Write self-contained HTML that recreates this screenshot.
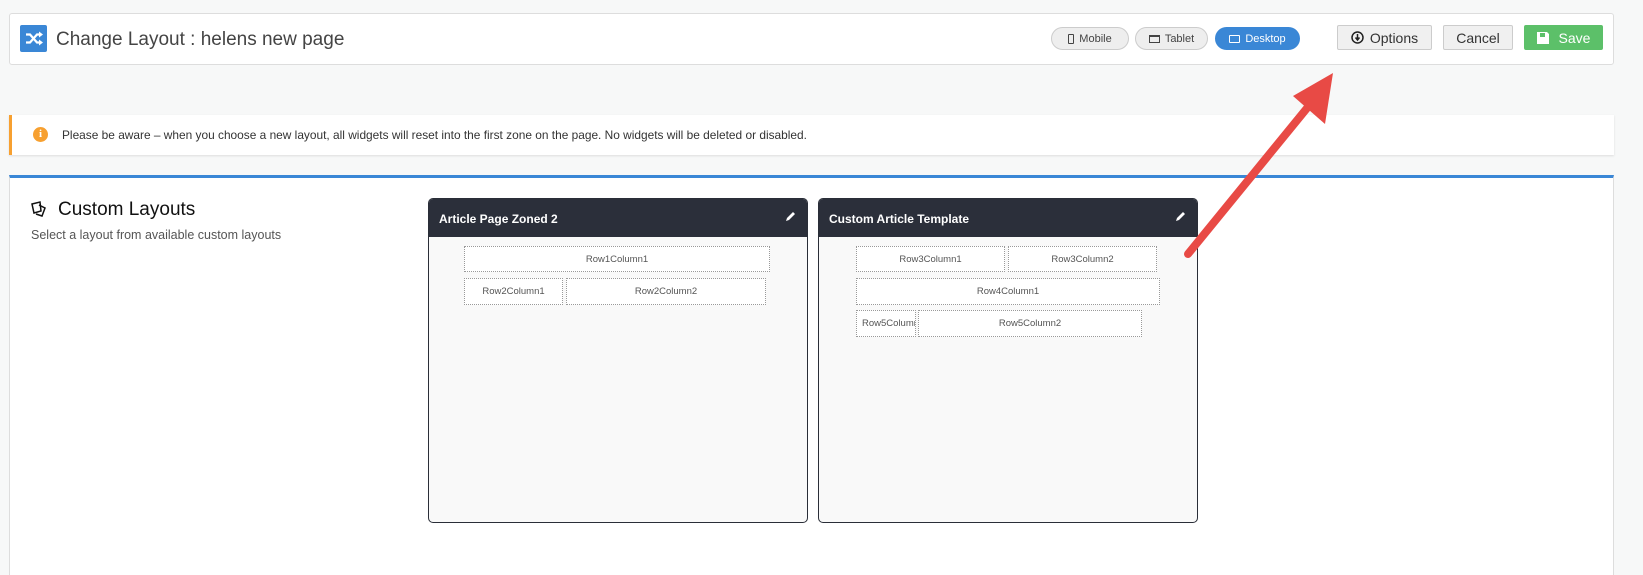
<!DOCTYPE html>
<html><head><style>
*{box-sizing:border-box;margin:0;padding:0}
body{width:1643px;height:550px;background:#f7f8f8;font-family:"Liberation Sans",sans-serif;position:relative;overflow:hidden;color:#333}
.abs{position:absolute}
.hdr{left:9px;top:13px;width:1605px;height:52px;background:#fff;border:1px solid #ddd;border-radius:3px}
.pill{position:absolute;top:27px;height:23px;border-radius:12px;border:1px solid #ccc;background:#eee;font-size:11px;color:#444;display:flex;align-items:center;justify-content:center;gap:5px}
.btn{position:absolute;top:25px;height:25px;border:1px solid #ccc;background:#f0f0f0;border-radius:2px;font-size:14px;color:#333;display:flex;align-items:center;justify-content:center;gap:6px}
.card{position:absolute;top:198px;width:380px;height:325px;border:1px solid #2a2e38;border-radius:5px;background:#f9f9f9;overflow:hidden}
.card .ch{height:38px;background:#2b2f3a;color:#fff;font-weight:bold;font-size:12px;padding:13px 10px;position:relative}
.z{position:absolute;border:1px dotted #999;background:#fff;font-size:9.5px;color:#555;display:flex;align-items:center;justify-content:center;white-space:nowrap;overflow:hidden}
</style></head><body>
<div class="abs hdr"></div>
<div class="abs" style="left:20px;top:25px;width:27px;height:27px;background:#3a87d6;border-radius:2px">
<svg width="27" height="27" viewBox="0 0 27 26"><path d="M6 9h4l7 8h4M6 17h4l7-8h4" stroke="#fff" stroke-width="2.2" fill="none"/><path d="M19 6l4 3-4 3zM19 14l4 3-4 3z" fill="#fff"/></svg></div>
<div class="abs" style="left:56px;top:29px;font-size:19px;color:#444">Change Layout : helens new page</div>
<div class="pill" style="left:1051px;width:78px"><span style="display:inline-block;width:6px;height:10px;border:1.5px solid #444;border-radius:1px"></span>Mobile</div>
<div class="pill" style="left:1135px;width:73px"><span style="display:inline-block;width:11px;height:8px;border:1.5px solid #444;border-top-width:2.5px"></span>Tablet</div>
<div class="pill" style="left:1215px;width:85px;background:#3a87d6;border-color:#3a87d6;color:#fff"><span style="display:inline-block;width:11px;height:8px;border:1.5px solid #fff;border-radius:1px"></span>Desktop</div>
<div class="btn" style="left:1337px;width:95px"><svg width="13" height="13"><circle cx="6.5" cy="6.5" r="5.5" stroke="#222" stroke-width="1.5" fill="none"/><path d="M6.5 3v5M4.5 6.5l2 2.5 2-2.5" stroke="#222" stroke-width="1.5" fill="none"/></svg>Options</div>
<div class="btn" style="left:1443px;width:70px">Cancel</div>
<div class="btn" style="left:1524px;width:79px;background:#5cc069;border-color:#5cc069;color:#fff"><svg width="12" height="12"><path d="M0 0h10l2 2v10H0z" fill="#fff"/><rect x="3" y="1" width="5" height="4" fill="#5cc069"/></svg>&nbsp;Save</div>

<div class="abs" style="left:9px;top:115px;width:1605px;height:40px;background:#fff;border-left:3px solid #f7a030;box-shadow:0 1px 2px #ddd"></div>
<div class="abs" style="left:33px;top:127px;width:15px;height:15px;border-radius:50%;background:#f7a030;color:#fff;font-size:11px;font-weight:bold;text-align:center;line-height:15px;font-family:'Liberation Serif',serif">i</div>
<div class="abs" style="left:62px;top:128px;font-size:11.9px;color:#333">Please be aware – when you choose a new layout, all widgets will reset into the first zone on the page. No widgets will be deleted or disabled.</div>

<div class="abs" style="left:9px;top:175px;width:1605px;height:400px;background:#fff;border-top:3px solid #3a87d6;border-left:1px solid #ddd;border-right:1px solid #ddd"></div>
<svg class="abs" style="left:30px;top:200px" width="18" height="18"><path d="M2 4l8-2 1 9-7 2z" stroke="#111" stroke-width="1.5" fill="none"/><path d="M9 5l6 3-3 8-6-2" stroke="#111" stroke-width="1.5" fill="none"/></svg>
<div class="abs" style="left:58px;top:199px;font-size:19px;color:#111">Custom Layouts</div>
<div class="abs" style="left:31px;top:228px;font-size:12.5px;color:#555">Select a layout from available custom layouts</div>

<div class="card" style="left:428px"><div class="ch">Article Page Zoned 2<svg style="position:absolute;right:10px;top:11px" width="14" height="14"><path d="M3 11l1-3 6-6 2 2-6 6z" fill="#fff"/></svg></div>
<div class="z" style="left:35px;top:47px;width:306px;height:26px">Row1Column1</div>
<div class="z" style="left:35px;top:79px;width:99px;height:27px">Row2Column1</div>
<div class="z" style="left:137px;top:79px;width:200px;height:27px">Row2Column2</div>
</div>
<div class="card" style="left:818px"><div class="ch">Custom Article Template<svg style="position:absolute;right:10px;top:11px" width="14" height="14"><path d="M3 11l1-3 6-6 2 2-6 6z" fill="#fff"/></svg></div>
<div class="z" style="left:37px;top:47px;width:149px;height:26px">Row3Column1</div>
<div class="z" style="left:189px;top:47px;width:149px;height:26px">Row3Column2</div>
<div class="z" style="left:37px;top:79px;width:304px;height:27px">Row4Column1</div>
<div class="z" style="left:37px;top:111px;width:60px;height:27px;justify-content:flex-start;padding-left:5px">Row5Column1</div>
<div class="z" style="left:99px;top:111px;width:224px;height:27px">Row5Column2</div>
</div>

<svg class="abs" style="left:0;top:0" width="1643" height="550">
<line x1="1188" y1="254" x2="1312" y2="102" stroke="#e84a45" stroke-width="8" stroke-linecap="round"/>
<path d="M1333 73L1325 124L1293 96Z" fill="#e84a45"/>
</svg>
</body></html>
